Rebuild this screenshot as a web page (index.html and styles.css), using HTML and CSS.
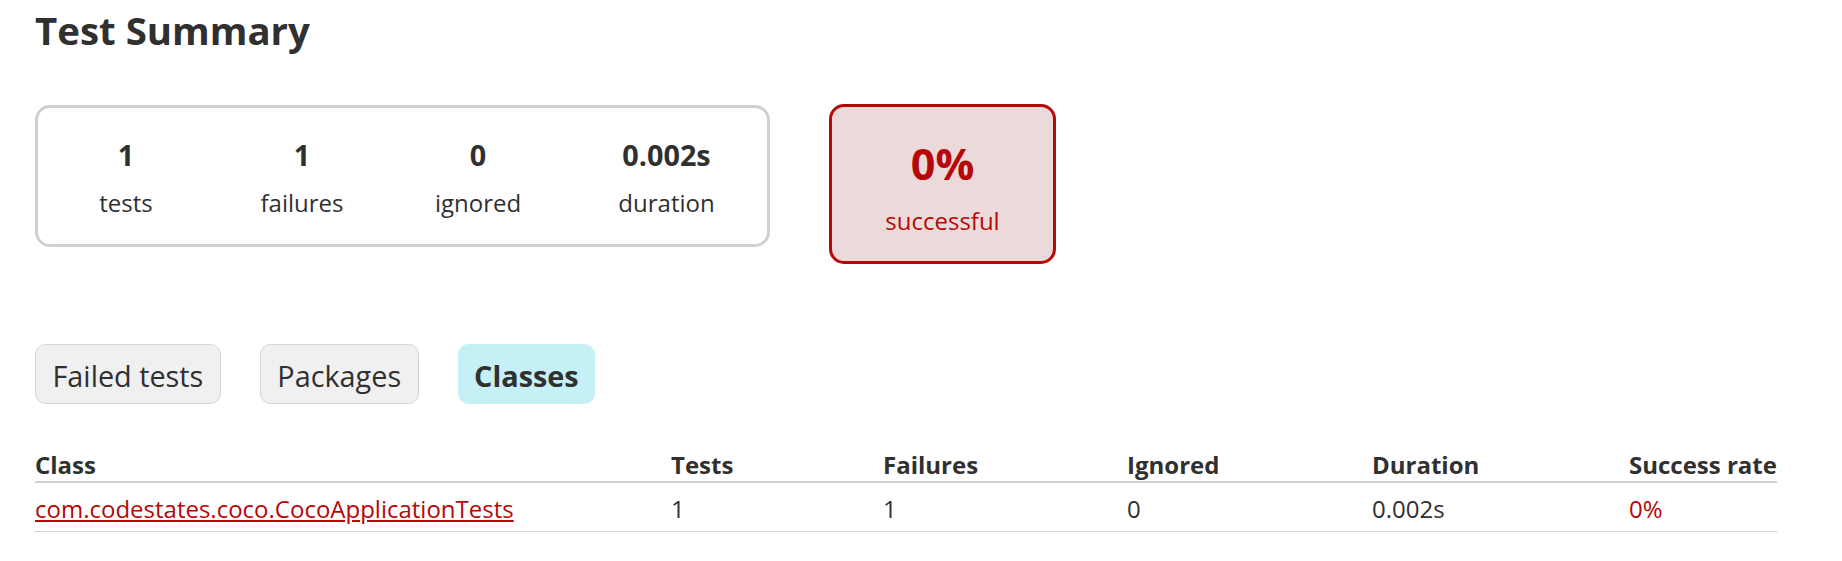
FILE: index.html
```html
<!DOCTYPE html>
<html lang="en">
<head>
<meta charset="utf-8">
<title>Test results - Test Summary</title>
<link rel="stylesheet" href="styles.css">
</head>
<body>
<div class="content">
  <h1 class="title">Test Summary</h1>
  <div class="summary">
    <div class="summary-group">
      <div class="info-box">
        <div class="counter">1</div>
        <p class="info-label">tests</p>
      </div>
      <div class="info-box">
        <div class="counter">1</div>
        <p class="info-label">failures</p>
      </div>
      <div class="info-box">
        <div class="counter">0</div>
        <p class="info-label">ignored</p>
      </div>
      <div class="info-box info-box-wide">
        <div class="counter">0.002s</div>
        <p class="info-label">duration</p>
      </div>
    </div>
    <div class="success-rate failures">
      <div class="percent">0%</div>
      <p class="info-label">successful</p>
    </div>
  </div>
  <ul class="tab-links">
    <li class="tab"><a class="tab-link" href="#tab0">Failed tests</a></li>
    <li class="tab"><a class="tab-link" href="#tab1">Packages</a></li>
    <li class="tab tab-selected"><a class="tab-link" href="#tab2">Classes</a></li>
  </ul>
  <table class="results">
    <colgroup>
      <col class="col-class">
      <col class="col-tests">
      <col class="col-failures">
      <col class="col-ignored">
      <col class="col-duration">
      <col class="col-rate">
    </colgroup>
    <thead>
      <tr>
        <th>Class</th>
        <th>Tests</th>
        <th>Failures</th>
        <th>Ignored</th>
        <th>Duration</th>
        <th>Success rate</th>
      </tr>
    </thead>
    <tbody>
      <tr>
        <td class="failed"><a class="failed-link" href="#">com.codestates.coco.CocoApplicationTests</a></td>
        <td>1</td>
        <td>1</td>
        <td>0</td>
        <td>0.002s</td>
        <td class="failed">0%</td>
      </tr>
    </tbody>
  </table>
</div>
</body>
</html>
```

FILE: styles.css
```css
html, body {
  margin: 0;
  padding: 0;
  background: #ffffff;
}

body {
  font-family: "Open Sans", "Noto Sans CJK KR", sans-serif;
  font-size: 24px;
  color: #303030;
}

.content {
  padding: 7px 0 0 35px;
}

.title {
  margin: 0;
  font-size: 38.4px;
  line-height: 46px;
  font-weight: 700;
  white-space: nowrap;
}

.summary {
  display: flex;
  align-items: flex-start;
  margin-top: 51px;
}

.summary-group {
  display: flex;
  margin-top: 1px;
  border: 3px solid #d0d0d0;
  border-radius: 15px;
}

.info-box {
  width: 176px;
  padding: 28px 0 25px;
  text-align: center;
}

.info-box-wide {
  width: 201px;
}

.counter {
  font-size: 28.8px;
  line-height: 38px;
  font-weight: 700;
  margin-bottom: 13px;
}

.info-label {
  margin: 0;
  font-size: 24px;
  line-height: 32px;
}

.success-rate {
  width: 221px;
  margin-left: 59px;
  padding: 28px 0 24px;
  text-align: center;
  border: 3px solid #b60808;
  border-radius: 15px;
  background: #ecdada;
  color: #b60808;
}

.percent {
  font-size: 43.2px;
  line-height: 57px;
  font-weight: 700;
  margin-bottom: 13px;
}

.tab-links {
  display: flex;
  margin: 80px 0 0;
  padding: 0;
  list-style: none;
}

.tab {
  margin-right: 39px;
  padding: 9.5px 16.5px 7px;
  border: 1px solid #d4d4d4;
  border-radius: 10.5px;
  background: #f0f0f0;
}

.tab-selected {
  background: #c5f0f5;
  border-color: #c5f0f5;
  padding-left: 15.5px;
  padding-right: 15.5px;
}

.tab-link {
  display: block;
  font-size: 28.8px;
  line-height: 41.4px;
  color: #303030;
  text-decoration: none;
  white-space: nowrap;
}

.tab-selected .tab-link {
  font-weight: 700;
}

.results {
  margin-top: 45px;
  width: 1742px;
  table-layout: fixed;
  border-collapse: collapse;
  border-bottom: 1px solid #d0d0d0;
}

.col-class { width: 636px; }
.col-tests { width: 212px; }
.col-failures { width: 244px; }
.col-ignored { width: 245px; }
.col-duration { width: 257px; }
.col-rate { width: 148px; }

.results th {
  padding: 0;
  text-align: left;
  font-weight: 700;
  font-size: 24px;
  line-height: 32px;
  white-space: nowrap;
  border-bottom: 2px solid #d0d0d0;
}

.results td {
  padding: 10px 0 6.5px;
  font-size: 24px;
  line-height: 32px;
  white-space: nowrap;
}

.failed,
.failed-link {
  color: #b60808;
}

.failed-link {
  text-decoration: underline;
}
```
